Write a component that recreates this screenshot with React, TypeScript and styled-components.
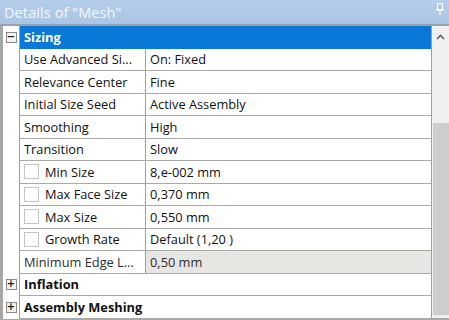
import React from 'react';
import styled, { createGlobalStyle } from 'styled-components';

const GlobalStyle = createGlobalStyle`
  html, body {
    margin: 0;
    padding: 0;
    background: #ffffff;
  }
  body {
    font-family: 'Open Sans', 'Noto Sans', 'Liberation Sans', sans-serif;
  }
`;

type Prop = {
  name: string;
  value: string;
  check?: boolean;
  readonly?: boolean;
};

const sizing: Prop[] = [
  { name: 'Use Advanced Si...', value: 'On: Fixed' },
  { name: 'Relevance Center', value: 'Fine' },
  { name: 'Initial Size Seed', value: 'Active Assembly' },
  { name: 'Smoothing', value: 'High' },
  { name: 'Transition', value: 'Slow' },
  { name: 'Min Size', value: '8,e-002 mm', check: true },
  { name: 'Max Face Size', value: '0,370 mm', check: true },
  { name: 'Max Size', value: '0,550 mm', check: true },
  { name: 'Growth Rate', value: 'Default (1,20 )', check: true },
  { name: 'Minimum Edge L...', value: '0,50 mm', readonly: true },
];

const App: React.FC = () => {
  return (
    <>
      <GlobalStyle />
      <Panel>
        <TitleBar>
          <TitleText>Details of "Mesh"</TitleText>
          <PinIcon width="8" height="12" viewBox="0 0 8 12">
            <rect x="1.5" y="0.5" width="5" height="6" fill="none" stroke="#ffffff" strokeWidth="1" />
            <line x1="0" y1="7" x2="8" y2="7" stroke="#ffffff" strokeWidth="1.2" />
            <line x1="4" y1="7" x2="4" y2="12" stroke="#ffffff" strokeWidth="1.2" />
          </PinIcon>
        </TitleBar>
        <Body>
          <Grid>
            <Row>
              <Gutter>
                <ToggleBox>−</ToggleBox>
              </Gutter>
              <GroupCell selected>Sizing</GroupCell>
            </Row>
            {sizing.map((p) => (
              <Row key={p.name}>
                <Gutter />
                <NameCell readonly={p.readonly}>
                  {p.check && <CheckBox />}
                  {p.name}
                </NameCell>
                <ValueCell readonly={p.readonly}>{p.value}</ValueCell>
              </Row>
            ))}
            <Row>
              <Gutter>
                <ToggleBox>+</ToggleBox>
              </Gutter>
              <GroupCell>Inflation</GroupCell>
            </Row>
            <Row>
              <Gutter>
                <ToggleBox>+</ToggleBox>
              </Gutter>
              <GroupCell>Assembly Meshing</GroupCell>
            </Row>
          </Grid>
          <ScrollBar>
            <ArrowButton>
              <svg width="9" height="6" viewBox="0 0 9 6">
                <polyline points="1,5 4.5,1.5 8,5" fill="none" stroke="#606060" strokeWidth="1.6" />
              </svg>
            </ArrowButton>
            <Track />
            <Thumb />
          </ScrollBar>
        </Body>
      </Panel>
    </>
  );
};

const Panel = styled.div`
  width: 449px;
  height: 320px;
  display: flex;
  flex-direction: column;
  overflow: hidden;
  background: #ffffff;
`;

const TitleBar = styled.div`
  height: 24px;
  flex: none;
  display: flex;
  align-items: center;
  justify-content: space-between;
  padding: 0 4px 0 4px;
  background: linear-gradient(to bottom, #b5cdea, #aac5e6);
  border-bottom: 2px solid #9aa3ad;
`;

const TitleText = styled.span`
  font-size: 14.5px;
  color: #f4f8fc;
  letter-spacing: 0.1px;
`;

const PinIcon = styled.svg`
  margin-right: 1px;
  margin-top: -6px;
`;

const Body = styled.div`
  flex: 1;
  display: flex;
  min-height: 0;
  border-bottom: 2px solid #a8a8a8;
`;

const Grid = styled.div`
  width: 428px;
  flex: none;
  display: flex;
  flex-direction: column;
  border-left: 3px solid #a6a6a6;
  border-right: 1px solid #a0a0a0;
`;

const Row = styled.div`
  height: 22.5px;
  flex: none;
  display: flex;
`;

const Gutter = styled.div`
  width: 16px;
  flex: none;
  display: flex;
  align-items: center;
  justify-content: center;
  background: #ffffff;
`;

const ToggleBox = styled.div`
  width: 9px;
  height: 9px;
  border: 1px solid #8a8a8a;
  background: #f4f4f4;
  font-family: 'DejaVu Sans', sans-serif;
  font-size: 10px;
  font-weight: bold;
  line-height: 8px;
  text-align: center;
  color: #202020;
`;

const Cell = styled.div`
  display: flex;
  align-items: center;
  box-sizing: border-box;
  border-left: 1px solid #a0a0a0;
  border-bottom: 1px solid #a9a9a9;
  font-size: 12.8px;
  white-space: nowrap;
  overflow: hidden;
`;

const GroupCell = styled(Cell)<{ selected?: boolean }>`
  flex: 1;
  padding-left: 4px;
  font-weight: 700;
  color: ${(p) => (p.selected ? '#ffffff' : '#111111')};
  background: ${(p) => (p.selected ? '#0a78d7' : '#ffffff')};
  border-bottom-color: ${(p) => (p.selected ? '#0a78d7' : '#a9a9a9')};
`;

const NameCell = styled(Cell)<{ readonly?: boolean }>`
  width: 126px;
  flex: none;
  padding-left: 4px;
  color: ${(p) => (p.readonly ? '#2e2e2e' : '#111111')};
`;

const ValueCell = styled(Cell)<{ readonly?: boolean }>`
  flex: 1;
  padding-left: 4px;
  color: ${(p) => (p.readonly ? '#2e2e2e' : '#111111')};
  background: ${(p) => (p.readonly ? '#e6e6e3' : '#ffffff')};
`;

const CheckBox = styled.span`
  width: 13px;
  height: 13px;
  flex: none;
  margin-right: 6px;
  border: 1px solid #c4c4c4;
  background: #ffffff;
`;

const ScrollBar = styled.div`
  flex: 1;
  display: flex;
  flex-direction: column;
  background: #f0f0f0;
`;

const ArrowButton = styled.div`
  height: 22px;
  display: flex;
  align-items: center;
  justify-content: center;
`;

const Track = styled.div`
  height: 75px;
`;

const Thumb = styled.div`
  height: 192px;
  margin-left: 1px;
  background: #cdcdcd;
`;

export default App;
